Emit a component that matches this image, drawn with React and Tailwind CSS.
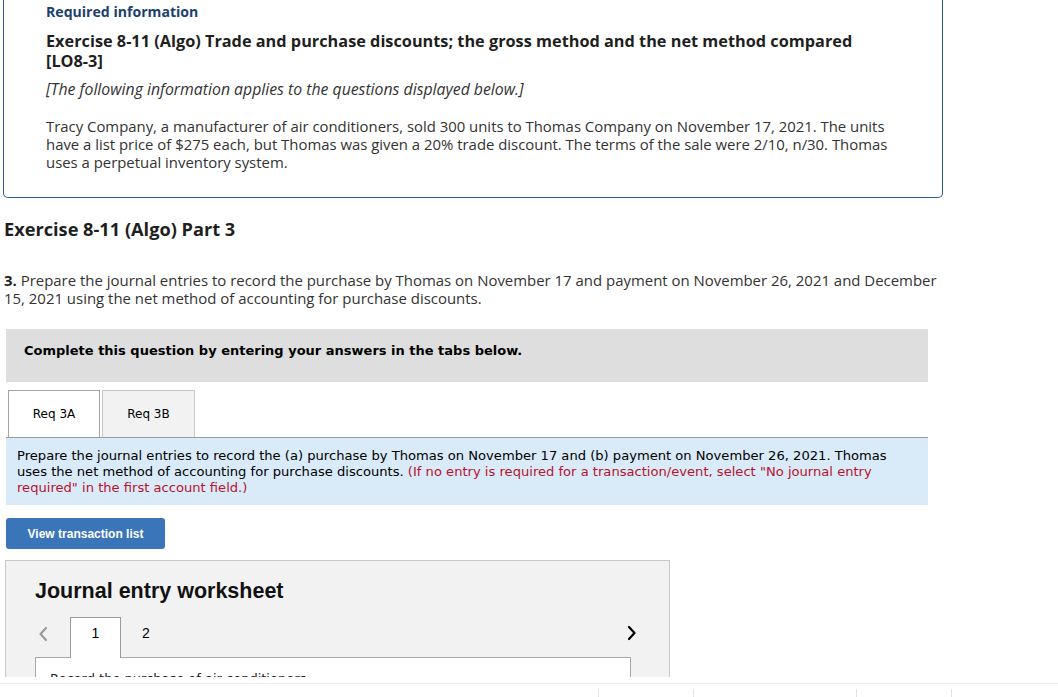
import React from "react";

const proxima = { fontFamily: "'Open Sans', Lato, sans-serif" };
const verdana = { fontFamily: "'DejaVu Sans', Verdana, sans-serif" };
const arial = { fontFamily: "'Liberation Sans', Arial, sans-serif" };

function ChevronLeft({ className }) {
  return (
    <svg className={className} width="10" height="16" viewBox="0 0 10 16" fill="none">
      <path d="M8 2 L2.5 8 L8 14" stroke="currentColor" strokeWidth="2.2" strokeLinecap="round" strokeLinejoin="round" />
    </svg>
  );
}
function ChevronRight({ className }) {
  return (
    <svg className={className} width="10" height="16" viewBox="0 0 10 16" fill="none">
      <path d="M2 2 L7.5 8 L2 14" stroke="currentColor" strokeWidth="2.2" strokeLinecap="round" strokeLinejoin="round" />
    </svg>
  );
}

export default function App() {
  return (
    <div className="h-[697px] w-[1058px] flex flex-col bg-white overflow-hidden">
      <div className="flex-1 overflow-hidden">
        {/* Top info card */}
        <div
          className="ml-[3px] w-[940px] border-x border-b border-[#2a5a96] rounded-b-[5px] pl-[42px] pr-[10px] pt-[3px] pb-[26px] text-[#222]"
          style={proxima}
        >
          <div className="text-[14.1px] leading-[18px] font-bold text-[#1c3f6e]">Required information</div>
          <div className="mt-[10px] text-[16.3px] leading-[20px] font-bold text-[#1f1f1f] whitespace-nowrap">
            Exercise 8-11 (Algo) Trade and purchase discounts; the gross method and the net method compared
            <br />
            [LO8-3]
          </div>
          <div className="mt-[8px] text-[15.8px] leading-[20px] italic text-[#333]">
            [The following information applies to the questions displayed below.]
          </div>
          <div className="mt-[18px] text-[14.9px] leading-[18px] text-[#333] whitespace-nowrap">
            Tracy Company, a manufacturer of air conditioners, sold 300 units to Thomas Company on November 17, 2021. The units
            <br />
            have a list price of $275 each, but Thomas was given a 20% trade discount. The terms of the sale were 2/10, n/30. Thomas
            <br />
            uses a perpetual inventory system.
          </div>
        </div>

        {/* Part heading */}
        <div className="ml-[4px] mt-[19px] text-[18.2px] leading-[24px] font-bold text-[#1f1f1f]" style={proxima}>
          Exercise 8-11 (Algo) Part 3
        </div>

        <div className="ml-[4px] mt-[30px] text-[14.95px] leading-[18px] text-[#333] whitespace-nowrap" style={proxima}>
          <span className="font-bold text-[#1f1f1f]">3.</span> Prepare the journal entries to record the purchase by Thomas on November 17 and payment on November 26, 2021 and December
          <br />
          15, 2021 using the net method of accounting for purchase discounts.
        </div>

        {/* Gray instruction box */}
        <div className="ml-[6px] mt-[22px] w-[922px] h-[53px] bg-[#dedede] pl-[18px] pt-[14px]" style={verdana}>
          <div className="text-[13px] leading-[16px] font-bold text-black">
            Complete this question by entering your answers in the tabs below.
          </div>
        </div>

        {/* Tabs */}
        <div className="ml-[6px] mt-[8px] w-[922px] border-b border-[#9a9a9a] flex items-end pl-[2px] gap-[2px]" style={verdana}>
          <div className="w-[92px] h-[47px] bg-white border-x border-t border-[#a5a5a5] flex items-center justify-center text-[12px] text-black">
            Req 3A
          </div>
          <div className="w-[93px] h-[47px] bg-[#f2f2f2] border-x border-t border-[#c8c8c8] flex items-center justify-center text-[12px] text-black">
            Req 3B
          </div>
        </div>

        {/* Blue info */}
        <div className="ml-[6px] w-[922px] h-[67px] bg-[#d9eaf8] pl-[11px] pt-[10px] text-[13.1px] leading-[16px] text-black whitespace-nowrap" style={verdana}>
          Prepare the journal entries to record the (a) purchase by Thomas on November 17 and (b) payment on November 26, 2021. Thomas
          <br />
          uses the net method of accounting for purchase discounts.{" "}
          <span className="text-[#b8132d]">
            (If no entry is required for a transaction/event, select "No journal entry
            <br />
            required" in the first account field.)
          </span>
        </div>

        {/* Button */}
        <button
          className="ml-[6px] mt-[13px] w-[159px] h-[31px] rounded-[3px] bg-[#3a75b9] text-white text-[12px] font-bold flex items-center justify-center"
          style={arial}
        >
          View transaction list
        </button>

        {/* Worksheet */}
        <div className="ml-[5px] mt-[11px] w-[665px] h-[200px] bg-[#f2f2f2] border border-[#c8c8c8] pl-[29px] pt-[18px]" style={arial}>
          <div className="text-[21.5px] leading-[24px] font-bold text-[#111]">Journal entry worksheet</div>
          <div className="mt-[14px] flex items-end w-[596px] relative">
            <div className="w-[35px] h-[40px] flex items-center pl-[3px] pb-[6px] text-[#9a9a9a]">
              <ChevronLeft />
            </div>
            <div className="w-[51px] h-[41px] bg-white border-x border-t border-[#9a9a9a] -mb-px relative z-10 flex items-center justify-center pb-[9px] text-[14px] text-black">
              1
            </div>
            <div className="w-[50px] h-[40px] flex items-center justify-center pb-[8px] text-[14px] text-black">2</div>
            <div className="flex-1" />
            <div className="h-[40px] flex items-center pb-[8px] -mr-[6px] text-black">
              <ChevronRight />
            </div>
          </div>
          <div className="w-[596px] h-[80px] bg-white border border-[#aaaaaa] pl-[14px] pt-[13px] text-[13px] leading-[16px] text-[#222]" style={verdana}>
            Record the purchase of air conditioners.
          </div>
        </div>
      </div>

      {/* Bottom bar */}
      <div className="h-[20px] bg-white pt-[6px]">
        <div className="h-full border-t border-[#ececec] flex">
          <div className="w-[598px]" />
          <div className="w-[95px] mt-[5px] border-l border-[#e2e2e2]" />
          <div className="w-[163px] mt-[5px] border-l border-[#e2e2e2]" />
          <div className="w-[95px] mt-[5px] border-l border-[#e2e2e2]" />
          <div className="flex-1 mt-[5px] border-l border-[#e2e2e2]" />
        </div>
      </div>
    </div>
  );
}
